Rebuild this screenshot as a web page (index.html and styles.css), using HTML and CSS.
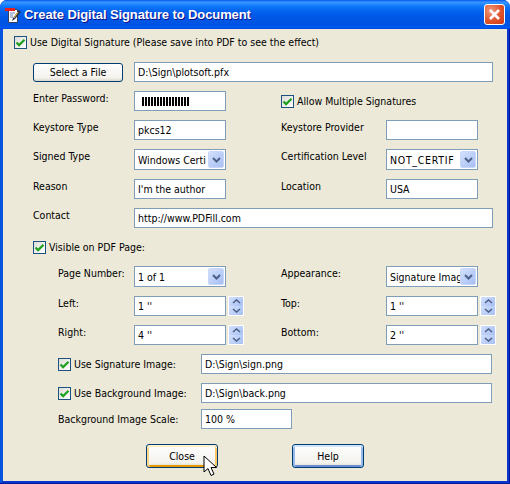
FILE: index.html
```html
<!DOCTYPE html>
<html lang="en">
<head>
<meta charset="utf-8">
<title>Create Digital Signature to Document</title>
<link rel="stylesheet" href="styles.css">
</head>
<body>
<div class="window">
  <header class="titlebar">
    <svg class="app-icon" viewBox="0 0 16 16" width="16" height="16">
      <path d="M3.5 2.5h9v13h-9z" fill="#fff" stroke="#30405a" stroke-width="1"/>
      <path d="M0 1h10v3H0z" fill="#e8201c"/>
      <path d="M5 6h5M5 8h3M5 10h3" stroke="#6a7fb5" stroke-width="1"/>
      <path d="M14 3L8 11l-1 3 3-2 6-7z" fill="#2a2f52"/>
      <path d="M13 5L9 11" stroke="#f0d040" stroke-width="1"/>
    </svg>
    <h1 class="title">Create Digital Signature to Document</h1>
    <div class="close-x">
      <svg viewBox="0 0 19 19" width="19" height="19"><path d="M5 5l9 9M14 5l-9 9" stroke="#fff" stroke-width="2.6"/></svg>
    </div>
  </header>
  <main class="body">
    <div class="row-check h-use">
      <span class="check"><svg viewBox="0 0 11 11" width="11" height="11"><path d="M1.5 5.5l2.6 2.6 5.4-5.4" fill="none" stroke="#21a121" stroke-width="2.2"/></svg></span>
      <span>Use Digital Signature (Please save into PDF to see the effect)</span>
    </div>

    <div class="row-file">
      <button class="btn btn-file" type="button">Select a File</button>
      <div class="field f-wide">D:\Sign\plotsoft.pfx</div>
    </div>

    <div class="row g-top t-pass">
      <span class="lab">Enter Password:</span>
      <div class="field"><span class="mask"></span></div>
      <span class="allow">
        <span class="check"><svg viewBox="0 0 11 11" width="11" height="11"><path d="M1.5 5.5l2.6 2.6 5.4-5.4" fill="none" stroke="#21a121" stroke-width="2.2"/></svg></span>
        <span>Allow Multiple Signatures</span>
      </span>
    </div>

    <div class="row g-top t-key">
      <span class="lab">Keystore Type</span>
      <div class="field">pkcs12</div>
      <span class="lab c-r">Keystore Provider</span>
      <div class="field c-rf"></div>
    </div>

    <div class="row g-top t-sig tall">
      <span class="lab">Signed Type</span>
      <div class="field combo"><span class="clip">Windows Certi</span><span class="drop"><svg viewBox="0 0 9 6" width="9" height="6"><path d="M1 1l3.5 3.5L8 1" fill="none" stroke="#4d6185" stroke-width="2"/></svg></span></div>
      <span class="lab c-r">Certification Level</span>
      <div class="field combo c-rf"><span class="clip wide-caps">NOT_CERTIF</span><span class="drop"><svg viewBox="0 0 9 6" width="9" height="6"><path d="M1 1l3.5 3.5L8 1" fill="none" stroke="#4d6185" stroke-width="2"/></svg></span></div>
    </div>

    <div class="row g-top t-rea">
      <span class="lab">Reason</span>
      <div class="field">I'm the author</div>
      <span class="lab c-r">Location</span>
      <div class="field c-rf">USA</div>
    </div>

    <div class="row-file t-con">
      <span class="lab lab-con">Contact</span>
      <div class="field f-wide">http://www.PDFill.com</div>
    </div>

    <div class="row-check h-vis">
      <span class="check"><svg viewBox="0 0 11 11" width="11" height="11"><path d="M1.5 5.5l2.6 2.6 5.4-5.4" fill="none" stroke="#21a121" stroke-width="2.2"/></svg></span>
      <span>Visible on PDF Page:</span>
    </div>

    <div class="row g-ind t-page tall">
      <span class="lab">Page Number:</span>
      <div class="field combo"><span class="clip">1 of 1</span><span class="drop"><svg viewBox="0 0 9 6" width="9" height="6"><path d="M1 1l3.5 3.5L8 1" fill="none" stroke="#4d6185" stroke-width="2"/></svg></span></div>
      <span class="lab c-r">Appearance:</span>
      <div class="field combo c-rf"><span class="clip">Signature Imag</span><span class="drop"><svg viewBox="0 0 9 6" width="9" height="6"><path d="M1 1l3.5 3.5L8 1" fill="none" stroke="#4d6185" stroke-width="2"/></svg></span></div>
    </div>

    <div class="row g-ind t-left">
      <span class="lab">Left:</span>
      <div class="field">1 ''</div>
      <div class="spin"><span class="sp"><svg viewBox="0 0 9 5" width="9" height="5"><path d="M1 4l3.5-3L8 4" fill="none" stroke="#4d6185" stroke-width="1.6"/></svg></span><span class="sp"><svg viewBox="0 0 9 5" width="9" height="5"><path d="M1 1l3.5 3L8 1" fill="none" stroke="#4d6185" stroke-width="1.6"/></svg></span></div>
      <span class="lab c-r">Top:</span>
      <div class="field c-rf">1 ''</div>
      <div class="spin c-rs"><span class="sp"><svg viewBox="0 0 9 5" width="9" height="5"><path d="M1 4l3.5-3L8 4" fill="none" stroke="#4d6185" stroke-width="1.6"/></svg></span><span class="sp"><svg viewBox="0 0 9 5" width="9" height="5"><path d="M1 1l3.5 3L8 1" fill="none" stroke="#4d6185" stroke-width="1.6"/></svg></span></div>
    </div>

    <div class="row g-ind t-right">
      <span class="lab">Right:</span>
      <div class="field">4 ''</div>
      <div class="spin"><span class="sp"><svg viewBox="0 0 9 5" width="9" height="5"><path d="M1 4l3.5-3L8 4" fill="none" stroke="#4d6185" stroke-width="1.6"/></svg></span><span class="sp"><svg viewBox="0 0 9 5" width="9" height="5"><path d="M1 1l3.5 3L8 1" fill="none" stroke="#4d6185" stroke-width="1.6"/></svg></span></div>
      <span class="lab c-r">Bottom:</span>
      <div class="field c-rf">2 ''</div>
      <div class="spin c-rs"><span class="sp"><svg viewBox="0 0 9 5" width="9" height="5"><path d="M1 4l3.5-3L8 4" fill="none" stroke="#4d6185" stroke-width="1.6"/></svg></span><span class="sp"><svg viewBox="0 0 9 5" width="9" height="5"><path d="M1 1l3.5 3L8 1" fill="none" stroke="#4d6185" stroke-width="1.6"/></svg></span></div>
    </div>

    <div class="row-img t-si">
      <span class="check"><svg viewBox="0 0 11 11" width="11" height="11"><path d="M1.5 5.5l2.6 2.6 5.4-5.4" fill="none" stroke="#21a121" stroke-width="2.2"/></svg></span>
      <span class="img-lab">Use Signature Image:</span>
      <div class="field f-img">D:\Sign\sign.png</div>
    </div>
    <div class="row-img t-bi">
      <span class="check"><svg viewBox="0 0 11 11" width="11" height="11"><path d="M1.5 5.5l2.6 2.6 5.4-5.4" fill="none" stroke="#21a121" stroke-width="2.2"/></svg></span>
      <span class="img-lab">Use Background Image:</span>
      <div class="field f-img">D:\Sign\back.png</div>
    </div>
    <div class="row-img t-sc">
      <span class="lab lab-sc">Background Image Scale:</span>
      <div class="field f-sc">100 %</div>
    </div>

    <div class="actions">
      <button class="btn btn-close" type="button">Close</button>
      <button class="btn btn-help" type="button">Help</button>
      <svg class="cursor" viewBox="0 0 16 22" width="16" height="22"><path d="M1 1v16l4-3.5 3 7 3-1.4-3-6.6h5.5z" fill="#fff" stroke="#000" stroke-width="1"/></svg>
    </div>
  </main>
</div>
</body>
</html>
```
FILE: styles.css
```css
* { box-sizing: border-box; }
html, body { margin: 0; padding: 0; background: #fff; }
body { width: 510px; height: 484px; overflow: hidden; font-family: "DejaVu Sans Condensed", "Liberation Sans", Arial, sans-serif; font-size: 10.5px; color: #000; }
.window { width: 510px; height: 484px; display: flex; flex-direction: column; border-radius: 7px 7px 0 0; overflow: hidden; background: #0019a0; }
.titlebar { height: 29px; flex: none; display: flex; align-items: center; padding: 0 5px 0 5px; background: linear-gradient(180deg, #0058ee 0, #3a93ff 7%, #288eff 12%, #0f77f8 22%, #0262ee 40%, #0057e5 60%, #0054e3 85%, #0055eb 92%, #005bf5 96%, #003dd7 100%); }
.app-icon { flex: none; margin-right: 3px; }
.title { margin: 0; flex: 1; font-family: "Liberation Sans", Arial, sans-serif; font-size: 13px; font-weight: 700; color: #fff; text-shadow: 1px 1px 0 #0f1089; white-space: nowrap; letter-spacing: -.1px; }
.close-x { width: 21px; height: 21px; flex: none; border: 1px solid #fff; border-radius: 3px; background: radial-gradient(circle at 30% 30%, #f09a7c, #e0542c 55%, #c83a14); display: flex; align-items: center; justify-content: center; }
.body { flex: 1; position: relative; display: flex; flex-direction: column; background: #ece9d8; margin: 0 1px 1px 0; border-left: 3px solid #0855dd; border-right: 2px solid #0a35cc; border-bottom: 2px solid #0a35cc; padding-top: 3px; }

.field { height: 20px; background: #fff; border: 1px solid #7f9db9; padding: 0 3px 0 3px; display: flex; align-items: center; white-space: nowrap; overflow: hidden; }
.check { width: 13px; height: 13px; flex: none; border: 1px solid #1c5180; background: linear-gradient(135deg, #dcdcd7, #fff); display: flex; align-items: center; justify-content: center; }
.row-check { display: flex; align-items: center; gap: 3px; height: 20px; }
.h-use { padding-left: 11px; }
.h-vis { padding-left: 30px; margin-top: 9px; }
.row-file { display: flex; align-items: center; height: 20px; padding-left: 30px; margin-top: 10px; }
.f-wide { width: 359px; margin-left: 11px; }
.btn-file { width: 90px; height: 19px; }
.t-con { margin-top: 9px; }
.lab-con { width: 90px; margin-bottom: 6px; }
.row { display: grid; align-items: center; height: 20px; margin-top: 9px; }
.row.tall { height: 21px; }
.tall .field { height: 21px; }
.g-top { padding-left: 30px; grid-template-columns: 101px 92px 55px 105px 92px; }
.g-top .c-r { grid-column: 4; }
.g-top .c-rf { grid-column: 5; }
.g-ind { padding-left: 55px; grid-template-columns: 76px 92px 18px 37px 105px 92px 18px; }
.g-ind .spin { grid-column: 3; }
.g-ind .c-r { grid-column: 5; }
.g-ind .c-rf { grid-column: 6; }
.g-ind .c-rs { grid-column: 7; }
.lab { margin-bottom: 6px; white-space: nowrap; }
.tall .lab { margin-bottom: 8px; }
.allow { grid-column: 4 / span 2; display: flex; align-items: center; gap: 3px; }
.mask { display: block; width: 47px; height: 9px; margin-left: 4px; background: repeating-linear-gradient(90deg, #000 0 2px, #fff 2px 3px); }
.combo { padding-right: 1px; justify-content: space-between; }
.clip { flex: 1; white-space: nowrap; min-width: 0; }
.wide-caps { letter-spacing: .7px; }
.drop { width: 16px; height: 17px; flex: none; border-radius: 2px; background: linear-gradient(135deg, #d3e0fd, #a6bff3); display: flex; align-items: center; justify-content: center; border: 1px solid #c8d6f8; }
.spin { width: 16px; height: 20px; margin-left: 2px; display: flex; flex-direction: column; gap: 0; border: 1px solid #fff; }
.sp { flex: 1; background: linear-gradient(135deg, #d3e0fd, #a6bff3); display: flex; align-items: center; justify-content: center; border-radius: 1px; }
.row-img { display: flex; align-items: center; height: 20px; padding-left: 55px; }
.t-si { margin-top: 9px; }
.t-bi { margin-top: 9px; }
.t-sc { margin-top: 6px; }
.img-lab { width: 127px; margin-left: 3px; white-space: nowrap; }
.f-img { width: 291px; }
.lab-sc { width: 143px; margin-bottom: 0; }
.f-sc { width: 91px; }
.actions { display: flex; gap: 74px; padding-left: 143px; margin-top: 15px; position: relative; }
.btn { font: inherit; color: #000; padding: 0; border: 1px solid #003c74; border-radius: 3px; background: linear-gradient(180deg, #fff, #f4f3ee 80%, #dcd8cc); }
.btn-close, .btn-help { width: 72px; height: 24px; }
.btn-close { box-shadow: inset 0 2px 0 #fff0cf, inset 2px 0 0 #fbd889, inset -2px 0 0 #fbc761, inset 0 -2px 0 #e59700; }
.btn-help { box-shadow: inset 0 2px 0 #cee7ff, inset 2px 0 0 #98b8ea, inset -2px 0 0 #98b8ea, inset 0 -2px 0 #698cd4; }
.cursor { position: absolute; left: 200px; top: 11px; }
```
